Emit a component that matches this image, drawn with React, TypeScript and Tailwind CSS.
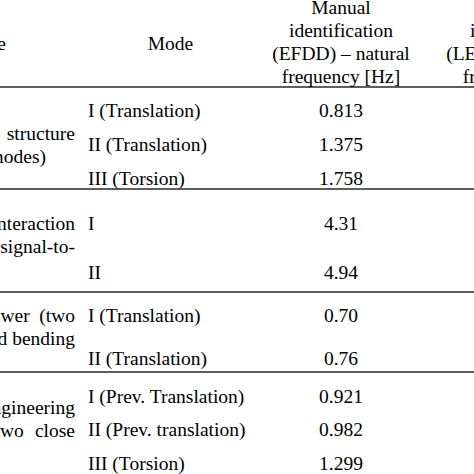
type Line = { text: string; kind: "full" | "last" | "end" };

type Group = {
  height: string;
  leftPad: string;
  rowPad: string;
  rowGap: string;
  lines: Line[];
  modes: string[];
  manual: string[];
  auto: string[];
};

const groups: Group[] = [
  {
    height: "h-[100px]",
    leftPad: "pt-[33.5px]",
    rowPad: "pt-[10.5px]",
    rowGap: "gap-[11px]",
    lines: [
      { text: "Laboratory steel structure", kind: "full" },
      { text: "(three modes)", kind: "end" },
    ],
    modes: ["I (Translation)", "II (Translation)", "III (Torsion)"],
    manual: ["0.813", "1.375", "1.758"],
    auto: ["0.812", "1.374", "1.757"],
  },
  {
    height: "h-[101px]",
    leftPad: "pt-[21.5px]",
    rowPad: "pt-[21.5px]",
    rowGap: "gap-[26px]",
    lines: [
      { text: "Soil-structure interaction", kind: "full" },
      { text: "(with low signal-to-", kind: "full" },
      { text: "noise ratio)", kind: "last" },
    ],
    modes: ["I", "II"],
    manual: ["4.31", "4.94"],
    auto: ["4.30", "4.95"],
  },
  {
    height: "h-[78px]",
    leftPad: "pt-[10.5px]",
    rowPad: "pt-[10.5px]",
    rowGap: "gap-[20px]",
    lines: [
      { text: "Communication tower (two", kind: "full" },
      { text: "translational and bending", kind: "end" },
      { text: "modes)", kind: "last" },
    ],
    modes: ["I (Translation)", "II (Translation)"],
    manual: ["0.70", "0.76"],
    auto: ["0.70", "0.76"],
  },
  {
    height: "h-[110px]",
    leftPad: "pt-[22.5px]",
    rowPad: "pt-[11.5px]",
    rowGap: "gap-[10.5px]",
    lines: [
      { text: "Civil engineering", kind: "full" },
      { text: "(footbridge with two close", kind: "full" },
      { text: "modes)", kind: "last" },
    ],
    modes: ["I (Prev. Translation)", "II (Prev. translation)", "III (Torsion)"],
    manual: ["0.921", "0.982", "1.299"],
    auto: ["0.920", "0.983", "1.298"],
  },
];

function Rule() {
  return <div className="h-[2px] w-full bg-[#5e5e5e]" />;
}

function LeftLine({ line }: { line: Line }) {
  if (line.kind === "full") {
    return <div className="text-justify [text-align-last:justify] whitespace-nowrap">{line.text}</div>;
  }
  if (line.kind === "end") {
    return (
      <div className={line.text.startsWith("(three") ? "text-right pr-[29px] whitespace-nowrap" : "text-right whitespace-nowrap"}>
        {line.text}
      </div>
    );
  }
  return <div className="text-left whitespace-nowrap">{line.text}</div>;
}

function GroupRow({ g }: { g: Group }) {
  return (
    <div className={`flex ${g.height}`}>
      {/* structure description */}
      <div className={`w-[231px] shrink-0 pr-[6px] ${g.leftPad}`}>
        {g.lines.map((l, i) => (
          <LeftLine key={i} line={l} />
        ))}
      </div>

      {/* mode */}
      <div className={`w-[179px] shrink-0 pl-[7px] flex flex-col ${g.rowPad} ${g.rowGap}`}>
        {g.modes.map((m, i) => (
          <div key={i} className="whitespace-nowrap">
            {m}
          </div>
        ))}
      </div>

      {/* manual EFDD */}
      <div className={`w-[162px] shrink-0 flex flex-col items-center ${g.rowPad} ${g.rowGap}`}>
        {g.manual.map((v, i) => (
          <div key={i}>{v}</div>
        ))}
      </div>

      {/* automatic */}
      <div className={`w-[200px] shrink-0 flex flex-col items-center ${g.rowPad} ${g.rowGap}`}>
        {g.auto.map((v, i) => (
          <div key={i}>{v}</div>
        ))}
      </div>
    </div>
  );
}

export default function App() {
  return (
    <div className="w-[474px] h-[474px] overflow-hidden bg-white">
      <div
        className="ml-[-150px] w-[772px] text-[19.5px] leading-[23px] text-black"
        style={{ fontFamily: '"Liberation Serif", "Times New Roman", serif' }}
      >
        {/* Header */}
        <div className="flex h-[86px]">
          <div className="w-[231px] shrink-0 pr-[75px] flex items-center justify-end">Structure</div>
          <div className="w-[179px] shrink-0 flex items-center justify-center">Mode</div>
          <div className="w-[162px] shrink-0 flex flex-col items-center justify-end mb-[-1.5px] whitespace-nowrap">
            <div>Manual</div>
            <div>identification</div>
            <div>(EFDD) – natural</div>
            <div>frequency [Hz]</div>
          </div>
          <div className="w-[200px] shrink-0 flex flex-col items-center justify-end mb-[-1.5px] whitespace-nowrap">
            <div>Automatic</div>
            <div>identification</div>
            <div>(LECSSI) – natural</div>
            <div>frequency [Hz]</div>
          </div>
        </div>
        <Rule />

        {groups.map((g, i) => (
          <div key={i}>
            <GroupRow g={g} />
            {i < groups.length - 1 && <Rule />}
          </div>
        ))}
      </div>
    </div>
  );
}
